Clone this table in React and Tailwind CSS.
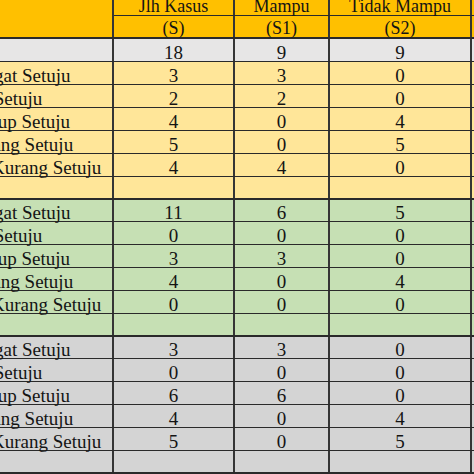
import React from "react";

const labels = ["Sangat Setuju", "Setuju", "Cukup Setuju", "Kurang Setuju", "Sangat Kurang Setuju", ""];

const sections = [
  {
    bg: "bg-[#FFE699]",
    heights: ["h-[23px]", "h-[23px]", "h-[23px]", "h-[23px]", "h-[23px]", "h-[23px]"],
    rows: [["3", "3", "0"], ["2", "2", "0"], ["4", "0", "4"], ["5", "0", "5"], ["4", "4", "0"], ["", "", ""]],
  },
  {
    bg: "bg-[#C6E0B4]",
    heights: ["h-[22px]", "h-[23px]", "h-[23px]", "h-[23px]", "h-[23px]", "h-[23px]"],
    rows: [["11", "6", "5"], ["0", "0", "0"], ["3", "3", "0"], ["4", "0", "4"], ["0", "0", "0"], ["", "", ""]],
  },
  {
    bg: "bg-[#D4D4D4]",
    heights: ["h-[22px]", "h-[23px]", "h-[23px]", "h-[23px]", "h-[23px]", "h-[23px]"],
    rows: [["3", "3", "0"], ["0", "0", "0"], ["6", "6", "0"], ["4", "0", "4"], ["5", "0", "5"], ["", "", ""]],
  },
];

const widths = ["w-[190px]", "w-[121px]", "w-[95px]", "w-[142px]", "w-[100px]"];

function Cell({ w, children, last }) {
  return (
    <div
      className={`${w} shrink-0 flex items-end justify-center whitespace-nowrap leading-[17px] ${
        last ? "" : "border-r-2 border-[#353535]"
      }`}
    >
      {children}
    </div>
  );
}

function Row({ bg, h, thick, cells }) {
  return (
    <div className={`flex ${h} ${bg} ${thick ? "border-b-2" : "border-b"} border-[#2a2a2a] text-[19px]`}>
      {cells.map((c, i) => (
        <Cell key={i} w={widths[i]} last={i === 4}>
          {c}
        </Cell>
      ))}
    </div>
  );
}

export default function App() {
  return (
    <div
      className="w-[474px] h-[474px] overflow-hidden bg-white text-[18px] text-[#141414]"
      style={{ fontFamily: '"Liberation Serif", "Times New Roman", serif' }}
    >
      <div className="-ml-[76px] -mt-[7px] w-max">
        {/* header */}
        <div className="flex bg-[#FFC000] border-b-2 border-[#2a2a2a]">
          <div className="w-[190px] shrink-0 h-[44px] border-r-2 border-[#353535]" />
          <div className="flex flex-col">
            <div className="flex h-[23px] border-b border-[#2a2a2a]">
              <Cell w={widths[1]}>Jlh Kasus</Cell>
              <Cell w={widths[2]}>Mampu</Cell>
              <Cell w={widths[3]}>Tidak Mampu</Cell>
              <Cell w={widths[4]} last />
            </div>
            <div className="flex h-[21px]">
              <Cell w={widths[1]}>(S)</Cell>
              <Cell w={widths[2]}>(S1)</Cell>
              <Cell w={widths[3]}>(S2)</Cell>
              <Cell w={widths[4]} last />
            </div>
          </div>
        </div>
        {/* total row */}
        <Row bg="bg-[#E7E6E6]" h="h-[23px]" cells={["", "18", "9", "9", ""]} />
        {sections.map((s, si) =>
          s.rows.map((r, ri) => (
            <Row
              key={`${si}-${ri}`}
              bg={s.bg}
              h={s.heights[ri]}
              thick={ri === 5}
              cells={[labels[ri], r[0], r[1], r[2], ""]}
            />
          ))
        )}
      </div>
    </div>
  );
}
